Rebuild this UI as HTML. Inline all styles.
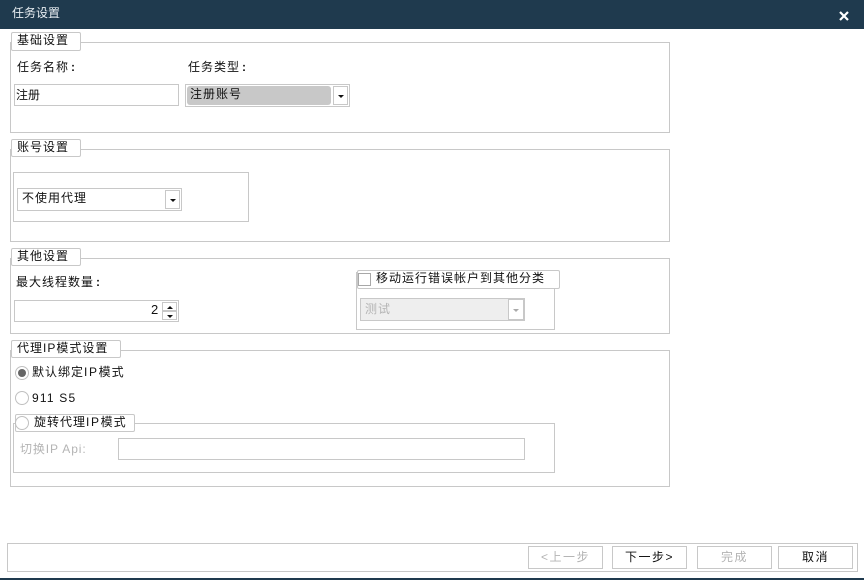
<!DOCTYPE html>
<html lang="zh">
<head>
<meta charset="utf-8">
<title>任务设置</title>
<style>
html,body{margin:0;padding:0;background:#fff;}
body{width:864px;height:580px;position:relative;overflow:hidden;font-family:"Liberation Sans","WenQuanYi Zen Hei","Noto Sans CJK SC",sans-serif;font-size:12px;color:#111;}
.a{position:absolute;box-sizing:border-box;}
.t{position:absolute;white-space:nowrap;line-height:14px;letter-spacing:1px;}
.g{position:absolute;box-sizing:border-box;border:1px solid #c8c8c8;background:#fff;}
.tab{position:absolute;box-sizing:border-box;border:1px solid #c8c8c8;background:#fff;border-radius:2px;white-space:nowrap;line-height:14px;letter-spacing:1px;}
.btn{position:absolute;box-sizing:border-box;top:546px;width:75px;height:23px;border:1px solid #c8c8c8;background:#fff;text-align:center;line-height:21px;letter-spacing:1.5px;}
.off{color:#b4b4b4;}
.arrow{position:absolute;box-sizing:border-box;border:1px solid #c8c8c8;background:#fff;}
.arrow i{position:absolute;left:50%;top:50%;margin:-1px 0 0 -3px;width:0;height:0;border-left:3px solid transparent;border-right:3px solid transparent;border-top:3px solid #111;}
.arrow i.up{border-top:0;border-bottom:3px solid #111;}
.arrow i.g2{border-top-color:#aaa;}
.radio{position:absolute;box-sizing:border-box;width:14px;height:14px;border:1px solid #c0c0c0;border-radius:50%;background:#fff;}
.c{font-weight:bold;margin-left:2px;}
.l{letter-spacing:1.6px;}
</style>
</head>
<body>
<div class="a" style="left:0;top:0;width:864px;height:29px;background:#1f3a4e;"></div>
<div class="t" style="left:12px;top:6px;color:#e8eef2;letter-spacing:0;">任务设置</div>
<svg class="a" style="left:838px;top:10px;" width="12" height="12" viewBox="0 0 12 12"><path d="M2 2 L10 10 M10 2 L2 10" stroke="#fff" stroke-width="2.2" fill="none"/></svg>

<!-- group 1 -->
<div class="g" style="left:10px;top:42px;width:660px;height:91px;"></div>
<div class="tab" style="left:11px;top:32px;width:70px;height:19px;padding-left:5px;">基础设置</div>
<div class="t" style="left:17px;top:60px;">任务名称<span class="c">:</span></div>
<div class="t" style="left:188px;top:60px;">任务类型<span class="c">:</span></div>
<div class="a" style="left:14px;top:84px;width:165px;height:22px;border:1px solid #c8c8c8;line-height:21px;padding-left:1px;">注册</div>
<div class="a" style="left:185px;top:84px;width:165px;height:23px;border:1px solid #c8c8c8;"></div>
<div class="a" style="left:187px;top:86px;width:144px;height:19px;background:#c8c8c8;border-radius:3px;"></div>
<div class="t" style="left:190px;top:87px;">注册账号</div>
<div class="arrow" style="left:333px;top:86px;width:15px;height:19px;"><i></i></div>

<!-- group 2 -->
<div class="g" style="left:10px;top:149px;width:660px;height:93px;"></div>
<div class="tab" style="left:11px;top:139px;width:70px;height:18px;padding-left:5px;">账号设置</div>
<div class="g" style="left:13px;top:172px;width:236px;height:50px;"></div>
<div class="a" style="left:17px;top:188px;width:165px;height:23px;border:1px solid #c8c8c8;"></div>
<div class="t" style="left:22px;top:191px;">不使用代理</div>
<div class="arrow" style="left:165px;top:190px;width:15px;height:19px;"><i></i></div>

<!-- group 3 -->
<div class="g" style="left:10px;top:258px;width:660px;height:76px;"></div>
<div class="tab" style="left:11px;top:248px;width:70px;height:18px;padding-left:5px;">其他设置</div>
<div class="t" style="left:16px;top:275px;">最大线程数量<span class="c">:</span></div>
<div class="a" style="left:14px;top:300px;width:165px;height:22px;border:1px solid #c8c8c8;"></div>
<div class="t" style="left:151px;top:303px;letter-spacing:0;font-size:13px;">2</div>
<div class="arrow" style="left:162px;top:302px;width:15px;height:9px;"><i class="up"></i></div>
<div class="arrow" style="left:162px;top:311px;width:15px;height:9px;"><i></i></div>
<div class="g" style="left:356px;top:272px;width:199px;height:58px;"></div>
<div class="tab" style="left:357px;top:270px;width:203px;height:19px;padding-left:18px;">移动运行错误帐户到其他分类</div>
<div class="a" style="left:358px;top:273px;width:13px;height:13px;border:1px solid #a8a8a8;background:#fff;"></div>
<div class="a" style="left:360px;top:298px;width:165px;height:23px;border:1px solid #c8c8c8;background:#eeeeee;"></div>
<div class="t off" style="left:365px;top:302px;">测试</div>
<div class="arrow" style="left:508px;top:299px;width:16px;height:21px;"><i class="g2"></i></div>

<!-- group 4 -->
<div class="g" style="left:10px;top:350px;width:660px;height:137px;"></div>
<div class="tab" style="left:11px;top:340px;width:110px;height:18px;padding-left:5px;">代理IP模式设置</div>
<div class="radio" style="left:15px;top:366px;"></div>
<div class="a" style="left:18px;top:369px;width:8px;height:8px;border-radius:50%;background:#666;"></div>
<div class="t" style="left:32px;top:365px;">默认绑定<span class="l">IP</span>模式</div>
<div class="radio" style="left:15px;top:391px;"></div>
<div class="t" style="left:32px;top:391px;letter-spacing:1.2px;">911 S5</div>
<div class="g" style="left:13px;top:423px;width:542px;height:50px;"></div>
<div class="tab" style="left:15px;top:414px;width:120px;height:18px;padding-left:18px;">旋转代理<span class="l">IP</span>模式</div>
<div class="radio" style="left:15px;top:416px;"></div>
<div class="t off" style="left:20px;top:442px;letter-spacing:.9px;">切换IP Api:</div>
<div class="a" style="left:118px;top:438px;width:407px;height:22px;border:1px solid #c8c8c8;"></div>

<!-- footer -->
<div class="a" style="left:7px;top:543px;width:851px;height:29px;border:1px solid #c8c8c8;"></div>
<div class="btn off" style="left:528px;">&lt;上一步</div>
<div class="btn" style="left:612px;">下一步&gt;</div>
<div class="btn off" style="left:697px;">完成</div>
<div class="btn" style="left:778px;">取消</div>
<div class="a" style="left:0;top:578px;width:864px;height:2px;background:#1f3a4e;"></div>
</body>
</html>
